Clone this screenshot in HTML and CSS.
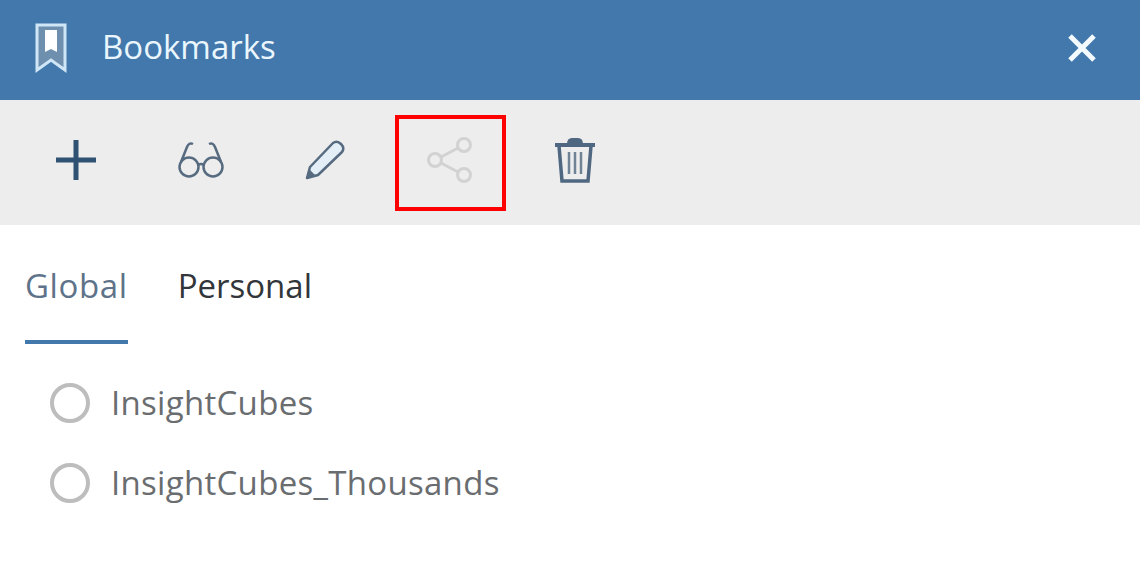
FILE: index.html
```html
<!DOCTYPE html>
<html lang="en">
<head>
    <meta charset="UTF-8">
    <title>Bookmarks</title>
    <link rel="stylesheet" href="styles.css">
</head>
<body>
<div class="panel">
    <div class="header">
        <svg class="bookmark-icon" width="32" height="50" viewBox="0 0 32 50">
            <path d="M2 2H30V47L16 37L2 47Z" fill="#6f8fae" stroke="#cfe6f7" stroke-width="3"/>
            <path d="M10 7H22V29L16 26L10 29Z" fill="#fff"/>
        </svg>
        <span class="title">Bookmarks</span>
        <svg class="close-icon" width="30" height="30" viewBox="0 0 30 30">
            <path d="M3 3L27 27M27 3L3 27" stroke="#f4fbff" stroke-width="5"/>
        </svg>
    </div>
    <div class="toolbar">
        <div class="tool tool-add">
            <svg width="42" height="42" viewBox="0 0 42 42">
                <path d="M21 1V41M1 21H41" stroke="#2f5273" stroke-width="5" fill="none"/>
            </svg>
        </div>
        <div class="tool tool-view">
            <svg width="46" height="38" viewBox="0 0 46 38">
                <circle cx="11" cy="26" r="9.5" fill="none" stroke="#566a80" stroke-width="2.5"/>
                <circle cx="35" cy="26" r="9.5" fill="none" stroke="#566a80" stroke-width="2.5"/>
                <path d="M20 24Q23 22 26 24M3 21L9 6Q11 1 15 3M43 21L37 6Q35 1 31 3" fill="none" stroke="#566a80" stroke-width="2.5"/>
            </svg>
        </div>
        <div class="tool tool-edit">
            <svg width="42" height="42" viewBox="0 0 42 42">
                <path d="M3 39L6 28L29 4Q33 1 37 5Q41 9 38 13L14 36Z" fill="#e4eef6" stroke="#566a80" stroke-width="2.5" stroke-linejoin="round"/>
                <path d="M2 40L5 30L12 37Z" fill="#566a80"/>
            </svg>
        </div>
        <div class="tool tool-share">
            <svg width="46" height="46" viewBox="0 0 46 46">
                <circle cx="8" cy="23" r="6.5" fill="none" stroke="#d2d2d2" stroke-width="3"/>
                <circle cx="37" cy="8" r="6.5" fill="none" stroke="#d2d2d2" stroke-width="3"/>
                <circle cx="37" cy="38" r="6.5" fill="none" stroke="#d2d2d2" stroke-width="3"/>
                <path d="M14 20L31 11M14 26L31 35" stroke="#d2d2d2" stroke-width="3"/>
            </svg>
        </div>
        <div class="tool tool-delete">
            <svg width="42" height="46" viewBox="0 0 42 46">
                <path d="M1 8H41" stroke="#4f6780" stroke-width="4"/>
                <path d="M13 7Q13 1 18 1H24Q29 1 29 7" fill="#4f6780"/>
                <path d="M5 9L8 44H34L37 9" fill="none" stroke="#4f6780" stroke-width="3.5"/>
                <path d="M15 15V37M21 15V37M27 15V37" stroke="#6f8296" stroke-width="2.5"/>
            </svg>
        </div>
        <div class="highlight"></div>
    </div>
    <div class="tabs">
        <div class="tab active">Global</div>
        <div class="tab">Personal</div>
    </div>
    <div class="list">
        <div class="item"><span class="radio"></span><span class="label">InsightCubes</span></div>
        <div class="item"><span class="radio"></span><span class="label">InsightCubes_Thousands</span></div>
    </div>
</div>
</body>
</html>
```

FILE: styles.css
```css
html, body {
    margin: 0;
    height: 100%;
    background: white;
}
.panel {
    font-family: "Open Sans", "Liberation Sans", sans-serif;
    height: 588px;
    overflow: hidden;
}
.header {
    height: 100px;
    background-color: #4278ab;
    display: flex;
    align-items: center;
    padding: 0 43px 4px 35px;
    box-sizing: border-box;
}
.bookmark-icon {
    margin-right: 35px;
}
.title {
    flex: 1;
    color: #eaf6fd;
    font-size: 33px;
    line-height: 40px;
    margin-top: -2px;
}
.toolbar {
    position: relative;
    height: 125px;
    box-sizing: border-box;
    padding-bottom: 5px;
    background-color: #ededed;
    display: flex;
    align-items: center;
}
.tool {
    display: flex;
    justify-content: center;
}
.tool-add {
    margin-left: 55px;
}
.tool-view {
    margin-left: 81px;
}
.tool-edit {
    margin-left: 80px;
}
.tool-share {
    margin-left: 81px;
}
.tool-delete {
    margin-left: 81px;
}
.highlight {
    position: absolute;
    left: 395px;
    top: 15px;
    width: 103px;
    height: 88px;
    border: 4px solid #ff0000;
}
.tabs {
    display: flex;
    gap: 50px;
    padding: 41px 0 0 25px;
}
.tab {
    color: #32363a;
    font-size: 33px;
    line-height: 40px;
    height: 78px;
    box-sizing: border-box;
}
.tab.active {
    color: #5e7389;
    letter-spacing: 0.6px;
    border-bottom: 4px solid #4278ab;
}
.list {
    padding: 19px 0 0 50px;
}
.item {
    display: flex;
    align-items: center;
    height: 80px;
    color: #6a6d70;
    font-size: 33px;
}
.label {
    margin-top: -2px;
    letter-spacing: 0.3px;
}
.radio {
    width: 32px;
    height: 32px;
    border: 4px solid #bdbdbd;
    border-radius: 50%;
    margin-right: 21px;
}
```
